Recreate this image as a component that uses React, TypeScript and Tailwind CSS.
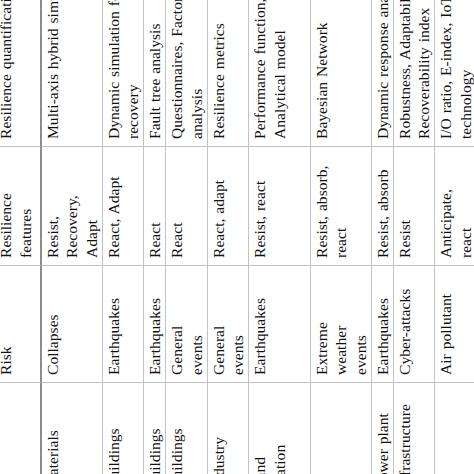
type Row = {
  sector: React.ReactNode
  risk: string
  features: string
  method: string
  minH?: string
}

const ROWS: Row[] = [
  { sector: 'Materials', risk: 'Collapses', features: 'Resist, Recovery, Adapt', method: 'Multi-axis hybrid simulation' },
  { sector: 'Buildings', risk: 'Earthquakes', features: 'React, Adapt', method: 'Dynamic simulation for recovery' },
  { sector: 'Buildings', risk: 'Earthquakes', features: 'React', method: 'Fault tree analysis' },
  { sector: 'Buildings', risk: 'General events', features: 'React', method: 'Questionnaires, Factor analysis' },
  { sector: 'Industry', risk: 'General events', features: 'React, adapt', method: 'Resilience metrics' },
  {
    sector: (
      <>
        Land
        <br />
        Station
      </>
    ),
    risk: 'Earthquakes',
    features: 'Resist, react',
    method: 'Performance function, Analytical model',
    minH: 'min-h-[61.5px]',
  },
  { sector: '', risk: 'Extreme weather events', features: 'Resist, absorb, react', method: 'Bayesian Network' },
  { sector: 'Power plant', risk: 'Earthquakes', features: 'Resist, absorb', method: 'Dynamic response analysis' },
  { sector: 'Infrastructure', risk: 'Cyber-attacks', features: 'Resist', method: 'Robustness, Adaptability, Recoverability index' },
  { sector: '', risk: 'Air pollutant', features: 'Anticipate, react', method: 'I/O ratio, E-index, IoT technology' },
]

const cell = 'border-b border-[#c2c2c2] pt-[1px] pb-[0.5px] pl-[7px]'

export default function App() {
  return (
    <div className="relative h-[474px] w-[474px] overflow-hidden bg-white">
      {/* the table is printed sideways, so it is built upright and turned */}
      <div className="absolute left-[-4px] top-[494px] w-[547px] origin-top-left -rotate-90 font-['Liberation_Serif',serif] text-[15.6px] leading-[19.5px] text-[#111111] [word-spacing:1px]">
        <div className="grid grid-cols-[112px_117px_119px_199px]">
          <div className="border-b-2 border-r border-b-[#8c8c8c] border-r-[#c2c2c2] pb-[4.5px] pl-[5px]" />
          <div className="border-b-2 border-r border-b-[#8c8c8c] border-r-[#c2c2c2] pb-[4.5px] pl-[7px] pr-[20px]">
            Risk
          </div>
          <div className="border-b-2 border-r border-b-[#8c8c8c] border-r-[#c2c2c2] pb-[4.5px] pl-[7px] pr-[16px]">
            Resilience features
          </div>
          <div className="border-b-2 border-b-[#8c8c8c] pb-[4.5px] pl-[7px] pr-[7px]">
            Resilience quantification
          </div>

          {ROWS.map((r, i) => (
            <div key={i} className="contents">
              <div className={`border-b border-r border-[#c2c2c2] pt-[1px] pb-[0.5px] pl-[5px] pr-[7px] ${r.minH ?? ''}`}>
                {r.sector}
              </div>
              <div className={`${cell} border-r pr-[20px]`}>{r.risk}</div>
              <div className={`${cell} border-r pr-[16px]`}>{r.features}</div>
              <div className={`${cell} pr-[7px]`}>{r.method}</div>
            </div>
          ))}
        </div>
      </div>
    </div>
  )
}
